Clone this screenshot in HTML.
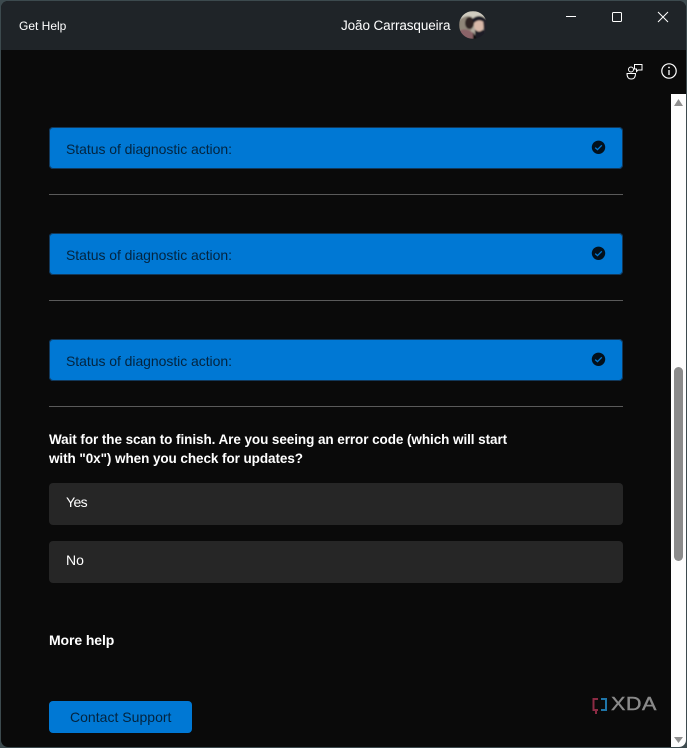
<!DOCTYPE html>
<html><head><meta charset="utf-8"><style>
html,body{margin:0;padding:0;background:#3c4a4e}
body{width:687px;height:748px;overflow:hidden;position:relative;font-family:"Liberation Sans",sans-serif}
.a{position:absolute;white-space:nowrap}
#win{left:1px;top:1px;width:685px;height:746px;background:#0a0a0a;border-radius:7px;overflow:hidden}
#tb{left:0;top:0;width:685px;height:49px;background:#1f2428}
.st{left:49px;width:574px;height:42px;background:#0078d4;border-radius:4px;box-shadow:inset 0 0 0 1px #12385a}
.stt{left:66px;font-size:14px;line-height:20px;color:#03243f;letter-spacing:-.05px}
.hr{left:49px;width:574px;height:1px;background:#5a5a5a}
.opt{left:49px;width:574px;height:42px;background:#262626;border-radius:4px}
.optt{left:66px;font-size:14px;line-height:20px;color:#fff}
.b{font-weight:bold;font-size:13.5px;line-height:19px;color:#fff;letter-spacing:-.07px}
</style></head><body>
<div class="a" id="win">
<div class="a" id="tb"></div>
</div>
<div class="a" style="left:19px;top:18px;font-size:12px;line-height:16px;color:#fff">Get Help</div>
<div class="a" style="left:341px;top:16px;font-size:13.5px;line-height:20px;color:#fff;letter-spacing:-.1px">João Carrasqueira</div>
<svg class="a" style="left:459px;top:11px" width="28" height="28" viewBox="0 0 28 28">
<defs><clipPath id="c"><circle cx="14" cy="14" r="14"/></clipPath><filter id="bl" x="-10%" y="-10%" width="120%" height="120%"><feGaussianBlur stdDeviation=".7"/></filter></defs>
<g clip-path="url(#c)"><g filter="url(#bl)"><rect width="28" height="28" fill="#b0a89c"/><rect x="0" y="0" width="28" height="7" fill="#d0ccc0"/><path d="M0 10Q6 3 13 6L14 16L10 22L0 24Z" fill="#8f8578"/><ellipse cx="10.500" cy="12" rx="4.500" ry="6" fill="#2e2420"/><path d="M0 20Q7 16 14 22L16 28H0Z" fill="#8a6468"/><rect x="16" y="19" width="12" height="9" fill="#1c1c26"/><ellipse cx="20" cy="14" rx="5" ry="6.500" fill="#d8b8a8"/><path d="M13 8Q20 2 27 8L26 12Q20 7 15 12Z" fill="#1e1e26"/><path d="M24 8h4v14h-3z" fill="#22222a"/><path d="M14 21l4 7h-4z" fill="#0c0c0c"/></g></g></svg>
<svg class="a" style="left:566px;top:8px" width="110" height="20" viewBox="0 0 110 20" fill="none" stroke="#fff" stroke-width="1">
<path d="M0 8.500H10"/><rect x="46.500" y="4.500" width="9" height="9" rx="1"/><path d="M92 4L102 14M102 4L92 14"/></svg>
<svg class="a" style="left:625px;top:62px" width="20" height="20" viewBox="0 0 20 20" fill="none" stroke="#fff" stroke-width="1">
<circle cx="6" cy="7.500" r="2.500"/><path d="M2 11.500H10.500C10.500 15 9 17 6.300 17C3.500 17 2 15 2 11.500Z"/><path d="M9.500 2.500H17V8H13L11.500 9.500V7H9.500Z"/></svg>
<svg class="a" style="left:660px;top:62px" width="18" height="18" viewBox="0 0 18 18" fill="none" stroke="#fff">
<circle cx="9" cy="9" r="7.200" stroke-width="1.200"/><path d="M9 8V13" stroke-width="1.300"/><circle cx="9" cy="5.500" r=".9" fill="#fff" stroke="none"/></svg>

<div class="a st" style="top:127px"></div><div class="a stt" style="top:139px">Status of diagnostic action:</div>
<div class="a hr" style="top:194px"></div>
<div class="a st" style="top:233px"></div><div class="a stt" style="top:245px">Status of diagnostic action:</div>
<div class="a hr" style="top:300px"></div>
<div class="a st" style="top:339px"></div><div class="a stt" style="top:351px">Status of diagnostic action:</div>
<div class="a hr" style="top:406px"></div>
<svg class="a" style="left:591px;top:140px" width="15" height="15" viewBox="0 0 15 15"><circle cx="7.500" cy="7.300" r="6.700" fill="#02101c"/><path d="M4.200 7.600L6.500 9.600L10.800 5.300" fill="none" stroke="#0078d4" stroke-width="1.300"/></svg>
<svg class="a" style="left:591px;top:246px" width="15" height="15" viewBox="0 0 15 15"><circle cx="7.500" cy="7.300" r="6.700" fill="#02101c"/><path d="M4.200 7.600L6.500 9.600L10.800 5.300" fill="none" stroke="#0078d4" stroke-width="1.300"/></svg>
<svg class="a" style="left:591px;top:352px" width="15" height="15" viewBox="0 0 15 15"><circle cx="7.500" cy="7.300" r="6.700" fill="#02101c"/><path d="M4.200 7.600L6.500 9.600L10.800 5.300" fill="none" stroke="#0078d4" stroke-width="1.300"/></svg>

<div class="a b" style="left:49px;top:430px">Wait for the scan to finish. Are you seeing an error code (which will start</div>
<div class="a b" style="left:49px;top:449px">with "0x") when you check for updates?</div>
<div class="a opt" style="top:483px"></div><div class="a optt" style="top:492px;letter-spacing:-.6px">Yes</div>
<div class="a opt" style="top:541px"></div><div class="a optt" style="top:550px">No</div>
<div class="a b" style="left:49px;top:631px;font-size:14px;letter-spacing:-.1px">More help</div>
<div class="a" style="left:49px;top:701px;width:143px;height:32px;background:#0078d4;border-radius:4px"></div>
<div class="a stt" style="left:70px;top:707px;letter-spacing:.02px">Contact Support</div>

<div class="a" style="left:671px;top:94px;width:15px;height:653px;background:#fdfdfd;border-radius:0 0 7px 0"></div>
<div class="a" style="left:674px;top:367px;width:9px;height:194px;background:#8b8b8b;border-radius:5px"></div>
<svg class="a" style="left:671px;top:94px" width="15" height="16"><path d="M3 12L7.500 5L12 12Z" fill="#8f8f8f"/></svg>
<svg class="a" style="left:671px;top:731px" width="15" height="16"><path d="M3 6L12 6L7.500 12Z" fill="#8f8f8f"/></svg>

<svg class="a" style="left:591px;top:695px" width="20" height="22" fill="none" stroke-width="2"><path d="M7 4H2.500V15H5V19" stroke="#8c2b44"/><path d="M7 15H5" stroke="#8c2b44"/><path d="M10 4H15V15H10" stroke="#1f75a8"/></svg>
<div class="a" style="left:611px;top:692px;font-size:18px;line-height:24px;color:#8a8a8a;letter-spacing:.4px;transform-origin:0 50%;transform:scale(1.2,1);-webkit-text-stroke:.4px #8a8a8a">XDA</div>
</body></html>
